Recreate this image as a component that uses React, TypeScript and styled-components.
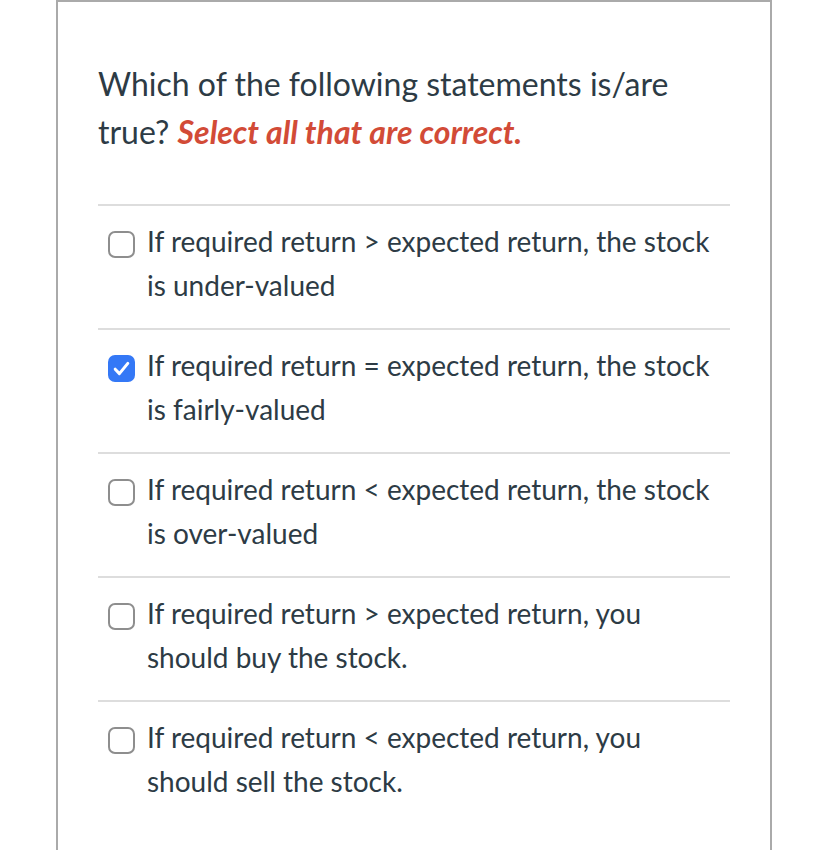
import styled, { createGlobalStyle } from "styled-components";

const GlobalStyle = createGlobalStyle`
  html, body {
    margin: 0;
    padding: 0;
    background: #ffffff;
  }
  body {
    font-family: Lato, "Noto Sans", sans-serif;
    color: #2d3b45;
  }
`;

type Option = {
  id: string;
  text: string;
  checked: boolean;
};

const options: Option[] = [
  {
    id: "a",
    text: "If required return > expected return, the stock is under-valued",
    checked: false,
  },
  {
    id: "b",
    text: "If required return = expected return, the stock is fairly-valued",
    checked: true,
  },
  {
    id: "c",
    text: "If required return < expected return, the stock is over-valued",
    checked: false,
  },
  {
    id: "d",
    text: "If required return > expected return, you should buy the stock.",
    checked: false,
  },
  {
    id: "e",
    text: "If required return < expected return, you should sell the stock.",
    checked: false,
  },
];

function CheckBox({ checked }: { checked: boolean }) {
  return (
    <Box $checked={checked}>
      {checked && (
        <svg width="27" height="27" viewBox="0 0 27 27">
          <path
            d="M7.2 14.2 L11.4 18.6 L19.8 8.4"
            fill="none"
            stroke="#ffffff"
            strokeWidth="3"
            strokeLinecap="round"
            strokeLinejoin="round"
          />
        </svg>
      )}
    </Box>
  );
}

export default function App() {
  return (
    <>
      <GlobalStyle />
      <Page>
        <Card>
          <Question>
            Which of the following statements is/are true?{" "}
            <Hint>Select all that are correct.</Hint>
          </Question>
          <Answers>
            {options.map((o) => (
              <Row key={o.id}>
                <CheckBox checked={o.checked} />
                <Label>{o.text}</Label>
              </Row>
            ))}
          </Answers>
        </Card>
      </Page>
    </>
  );
}

const Page = styled.main`
  padding-left: 56px;
  height: 850px;
  overflow: hidden;
`;

const Card = styled.section`
  width: 716px;
  min-height: 900px;
  box-sizing: border-box;
  border: 2px solid #aaaaaa;
  border-bottom: none;
  padding: 58px 40px 0;
`;

const Question = styled.p`
  margin: 0;
  font-size: 32px;
  line-height: 48px;
  padding-right: 36px;
`;

const Hint = styled.strong`
  font-style: italic;
  font-weight: 700;
  color: #d24b37;
`;

const Answers = styled.div`
  margin-top: 48px;
`;

const Row = styled.label`
  display: flex;
  align-items: flex-start;
  gap: 12px;
  border-top: 2px solid #dddddd;
  padding: 13px 0 21px 10px;
`;

const Box = styled.span<{ $checked: boolean }>`
  flex: none;
  width: 27px;
  height: 27px;
  margin-top: 12px;
  box-sizing: border-box;
  border-radius: 7px;
  display: flex;
  align-items: center;
  justify-content: center;
  background: ${({ $checked }) => ($checked ? "#3478f6" : "#ffffff")};
  border: ${({ $checked }) => ($checked ? "none" : "2.5px solid #8e8e8e")};
`;

const Label = styled.span`
  max-width: 575px;
  font-size: 28px;
  line-height: 44px;
`;
